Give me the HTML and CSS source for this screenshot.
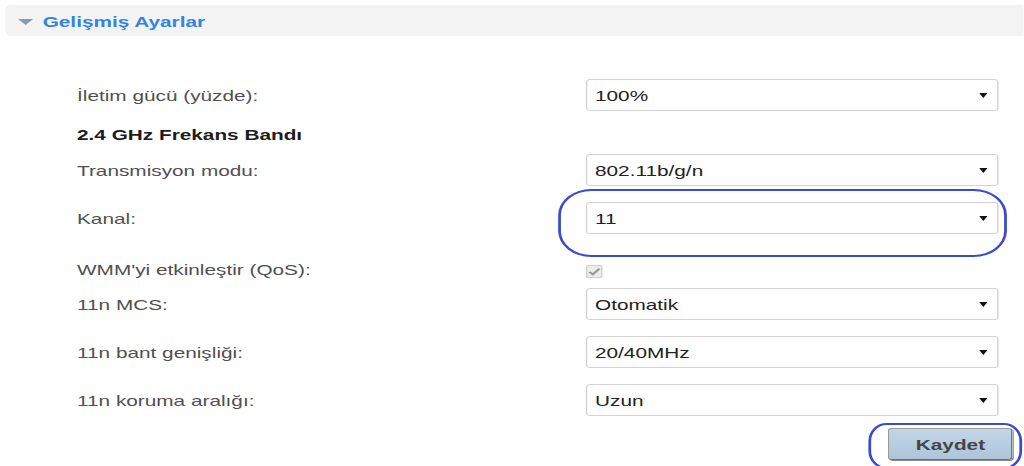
FILE: index.html
```html
<!DOCTYPE html>
<html lang="tr">
<head>
<meta charset="utf-8">
<title>Gelişmiş Ayarlar</title>
<link rel="stylesheet" href="styles.css">
</head>
<body>
<div class="page">
  <div class="panel-head">
    <svg class="caret" viewBox="0 0 11 6" width="11" height="6"><polygon points="0,0 11,0 5.5,6" fill="#8c9aab"/></svg>
    <span class="panel-title">Gelişmiş Ayarlar</span>
  </div>

  <div class="form">
    <div class="row row-first">
      <span class="label">İletim gücü (yüzde):</span>
      <div class="select"><span>100%</span><svg class="arrow" viewBox="0 0 6 5" width="6" height="5"><polygon points="0,0 6,0 3,5" fill="#111"/></svg></div>
    </div>
    <div class="heading">2.4 GHz Frekans Bandı</div>
    <div class="row">
      <span class="label">Transmisyon modu:</span>
      <div class="select"><span>802.11b/g/n</span><svg class="arrow" viewBox="0 0 6 5" width="6" height="5"><polygon points="0,0 6,0 3,5" fill="#111"/></svg></div>
    </div>
    <div class="row gap">
      <span class="label">Kanal:</span>
      <div class="select"><span>11</span><svg class="arrow" viewBox="0 0 6 5" width="6" height="5"><polygon points="0,0 6,0 3,5" fill="#111"/></svg></div>
    </div>
    <div class="row row-check">
      <span class="label">WMM'yi etkinleştir (QoS):</span>
      <span class="check"><svg viewBox="0 0 12 13" width="12" height="13"><path d="M2.5 6.8 L5 9.3 L9.8 3.6" fill="none" stroke="#9a9a9a" stroke-width="1.8"/></svg></span>
    </div>
    <div class="row after-check">
      <span class="label">11n MCS:</span>
      <div class="select"><span>Otomatik</span><svg class="arrow" viewBox="0 0 6 5" width="6" height="5"><polygon points="0,0 6,0 3,5" fill="#111"/></svg></div>
    </div>
    <div class="row gap">
      <span class="label">11n bant genişliği:</span>
      <div class="select"><span>20/40MHz</span><svg class="arrow" viewBox="0 0 6 5" width="6" height="5"><polygon points="0,0 6,0 3,5" fill="#111"/></svg></div>
    </div>
    <div class="row gap">
      <span class="label">11n koruma aralığı:</span>
      <div class="select"><span>Uzun</span><svg class="arrow" viewBox="0 0 6 5" width="6" height="5"><polygon points="0,0 6,0 3,5" fill="#111"/></svg></div>
    </div>
    <div class="actions">
      <button class="save" type="button">Kaydet</button>
    </div>
  </div>

  <div class="mark mark-channel"></div>
  <div class="mark mark-save"></div>
</div>
</body>
</html>
```

FILE: styles.css
```css
html, body {
  margin: 0;
  padding: 0;
  background: #ffffff;
  overflow: hidden;
}

body {
  width: 1024px;
  height: 466px;
  font-family: "Liberation Sans", Arial, sans-serif;
}

.page {
  position: relative;
  width: 739.4px;
  height: 466px;
  transform: scaleX(1.385);
  transform-origin: 0 0;
}

.panel-head {
  margin: 5px 0 0 4.3px;
  height: 31px;
  background: #f3f3f3;
  border-radius: 4px 0 0 4px;
  display: flex;
  align-items: center;
}

.caret {
  margin-left: 8.5px;
  margin-top: 2px;
  display: block;
}

.panel-title {
  margin-left: 7px;
  font-size: 15px;
  font-weight: bold;
  color: #3283e4;
  margin-top: 1px;
}

.form {
  padding-left: 55.6px;
  padding-top: 43px;
}

.row {
  display: flex;
  align-items: center;
  height: 32px;
}

.row.gap {
  margin-top: 16px;
}

.row-check {
  margin-top: 24px;
  height: 22px;
}

.after-check {
  margin-top: 8px;
}

.label {
  width: 367.5px;
  flex: none;
  font-size: 15px;
  color: #505050;
}

.heading {
  height: 43px;
  box-sizing: border-box;
  padding-top: 4px;
  display: flex;
  align-items: center;
  font-size: 15px;
  font-weight: bold;
  color: #1c1c1c;
}

.select {
  width: 298.2px;
  height: 32px;
  box-sizing: border-box;
  border: 1px solid #d2d2d2;
  border-radius: 3px;
  background: #ffffff;
  display: flex;
  align-items: center;
  justify-content: space-between;
  padding: 0 7.5px 0 5.5px;
  font-size: 15px;
  color: #222222;
}

.arrow {
  display: block;
}

.check {
  width: 12px;
  height: 13px;
  box-sizing: border-box;
  border: 1px solid #d0d0d0;
  border-radius: 2px;
  background: #ececec;
  display: flex;
  align-items: center;
  justify-content: center;
  margin-top: 4px;
}

.check svg {
  display: block;
  margin: -1px;
}

.actions {
  margin-top: 12px;
  display: flex;
  padding-left: 585.5px;
}

.save {
  width: 90.3px;
  height: 32px;
  box-sizing: border-box;
  border: 1px solid #9a9a9a;
  border-right-color: #6f6f6f;
  border-bottom-color: #6f6f6f;
  border-radius: 3px;
  background: linear-gradient(#c4d6e8, #adc4da);
  box-shadow: 1px 1px 0 #8a8a8a;
  font-family: "Liberation Sans", Arial, sans-serif;
  font-size: 15px;
  font-weight: bold;
  color: #454545;
  padding: 0;
}

.mark {
  position: absolute;
  box-sizing: border-box;
  border: 2px solid #3a4bd0;
}

.mark-channel {
  left: 402.9px;
  top: 184px;
  width: 324.2px;
  height: 68px;
  border-radius: 24px / 26px;
}

.mark-save {
  left: 626.7px;
  top: 418px;
  width: 111.2px;
  height: 46px;
  border-radius: 13px / 18px;
}
```
